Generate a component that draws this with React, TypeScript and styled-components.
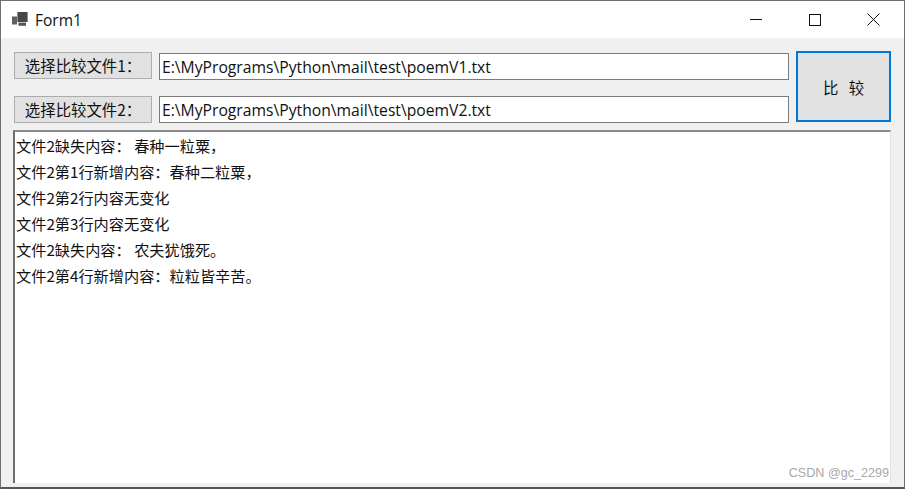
import React, { FC, ReactElement } from 'react';
import styled, { createGlobalStyle } from 'styled-components';

const FILE_ROWS = [
  { label: '选择比较文件1：', path: 'E:\\MyPrograms\\Python\\mail\\test\\poemV1.txt', tall: true },
  { label: '选择比较文件2：', path: 'E:\\MyPrograms\\Python\\mail\\test\\poemV2.txt', tall: false },
];

const RESULT_LINES = [
  '文件2缺失内容： 春种一粒粟，',
  '文件2第1行新增内容：春种二粒粟，',
  '文件2第2行内容无变化',
  '文件2第3行内容无变化',
  '文件2缺失内容： 农夫犹饿死。',
  '文件2第4行新增内容：粒粒皆辛苦。',
];

const App: FC = (): ReactElement => (
  <Window>
    <GlobalStyle />
    <TitleBar>
      <FormIcon width="16" height="15" viewBox="0 0 16 15">
        <rect x="0" y="4.5" width="5" height="8" fill="#606060" />
        <rect x="5.4" y="0" width="10.2" height="10" fill="#484848" />
        <rect x="6.4" y="10.6" width="7.6" height="3.2" fill="#585858" />
      </FormIcon>
      <Title>Form1</Title>
      <WindowControls>
        <ControlButton>
          <svg width="12" height="12" viewBox="0 0 12 12">
            <path d="M0 5.5H12" stroke="#111" strokeWidth="1" />
          </svg>
        </ControlButton>
        <ControlButton>
          <svg width="12" height="12" viewBox="0 0 12 12">
            <rect x="0.5" y="0.5" width="11" height="11" fill="none" stroke="#111" strokeWidth="1" />
          </svg>
        </ControlButton>
        <ControlButton>
          <svg width="13" height="13" viewBox="0 0 13 13">
            <path d="M0.5 0.5L12.5 12.5M12.5 0.5L0.5 12.5" stroke="#111" strokeWidth="1" />
          </svg>
        </ControlButton>
      </WindowControls>
    </TitleBar>
    <Body>
      <TopGrid>
        <FileRows>
          {FILE_ROWS.map((row) => (
            <FileRow key={row.label} $tall={row.tall}>
              <PickButton>{row.label}</PickButton>
              <PathInput readOnly value={row.path} />
            </FileRow>
          ))}
        </FileRows>
        <CompareButton>比&nbsp;&nbsp;&nbsp;较</CompareButton>
      </TopGrid>
      <ResultBox>
        {RESULT_LINES.map((line) => (
          <ResultLine key={line}>{line}</ResultLine>
        ))}
        <Watermark>CSDN @gc_2299</Watermark>
      </ResultBox>
    </Body>
  </Window>
);

const GlobalStyle = createGlobalStyle`
  html, body {
    margin: 0;
    padding: 0;
    background: #f0f0f0;
  }
  * {
    box-sizing: border-box;
  }
`;

const Window = styled.div`
  display: flex;
  flex-direction: column;
  width: 905px;
  height: 489px;
  overflow: hidden;
  border: 1px solid #707070;
  border-bottom: 2px solid #555;
  background: #f0f0f0;
  font-family: 'Open Sans', 'Noto Sans CJK SC', sans-serif;
  color: #111;
`;

const TitleBar = styled.div`
  display: flex;
  align-items: center;
  height: 37px;
  padding-left: 11px;
  background: #fff;
`;

const FormIcon = styled.svg`
  flex: none;
  margin-top: -1px;
`;

const Title = styled.span`
  margin-left: 7px;
  font-size: 15.5px;
`;

const WindowControls = styled.div`
  display: flex;
  margin-left: auto;
  padding-right: 1px;
`;

const ControlButton = styled.div`
  display: flex;
  align-items: center;
  justify-content: center;
  width: 59px;
  height: 37px;
`;

const Body = styled.div`
  flex: 1;
  min-height: 0;
  display: flex;
  flex-direction: column;
  padding: 13px 13px 4px 12px;
`;

const TopGrid = styled.div`
  display: flex;
  justify-content: space-between;
  height: 79px;
  flex: none;
`;

const FileRows = styled.div`
  display: flex;
  flex-direction: column;
  gap: 16px;
  padding: 1px 0 0 1px;
`;

const FileRow = styled.div<{ $tall: boolean }>`
  display: flex;
  justify-content: space-between;
  gap: 7px;
  height: ${({ $tall }) => ($tall ? '28px' : '27px')};
`;

const PickButton = styled.button`
  align-self: flex-start;
  width: 138px;
  height: 27px;
  padding: 0;
  border: 1px solid #adadad;
  background: #e1e1e1;
  font-family: 'Noto Sans CJK SC', sans-serif;
  font-size: 15.4px;
  line-height: 25px;
  color: #111;
`;

const PathInput = styled.input`
  align-self: flex-end;
  width: 630px;
  height: 27px;
  padding: 0 2px;
  border: 1px solid #7a7a7a;
  border-radius: 0;
  outline: none;
  background: #fff;
  font-family: 'Open Sans', sans-serif;
  font-size: 15.7px;
  color: #111;
`;

const CompareButton = styled.button`
  width: 95px;
  height: 71px;
  padding: 0;
  border: 2px solid #0078d7;
  background: #e1e1e1;
  font-family: 'Noto Sans CJK SC', sans-serif;
  font-size: 15.4px;
  color: #111;
`;

const ResultBox = styled.div`
  position: relative;
  flex: 1;
  min-height: 0;
  display: flex;
  flex-direction: column;
  padding: 0 0 0 1px;
  width: 878px;
  border-top: 2px solid #8a8a8a;
  border-left: 2px solid #6f6f6f;
  border-right: 1px solid #e3e3e3;
  background: #fff;
  font-family: 'Noto Sans CJK SC', sans-serif;
`;

const ResultLine = styled.div`
  height: 26px;
  line-height: 26px;
  font-size: 15.2px;
`;

const Watermark = styled.span`
  position: absolute;
  right: 1px;
  bottom: 3px;
  font-family: 'Liberation Sans', sans-serif;
  font-size: 12.6px;
  color: #a8a8a8;
`;

export default App;
